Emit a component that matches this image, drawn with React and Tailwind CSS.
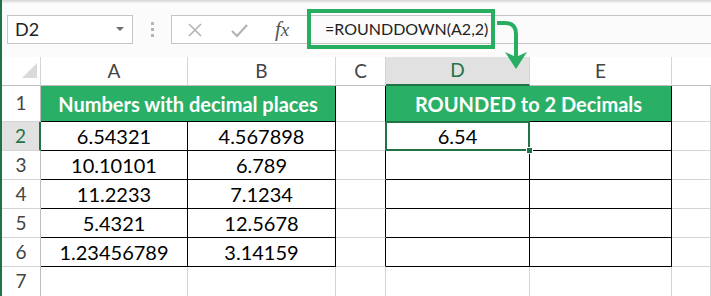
import React from 'react';

const FONT = { fontFamily: 'Lato, "Open Sans", sans-serif' };

const leftData = [
  ['6.54321', '4.567898'],
  ['10.10101', '6.789'],
  ['11.2233', '7.1234'],
  ['5.4321', '12.5678'],
  ['1.23456789', '3.14159'],
];

const ColHead = ({ label, active, last }) => (
  <div
    className={`flex items-center justify-center text-[19px] border-b ${
      last ? '' : 'border-r border-r-[#d4d4d4]'
    } ${
      active
        ? 'bg-[#e1e1e1] text-[#217346] border-b-2 border-b-[#217346]'
        : 'bg-white text-[#444] border-b-[#bdbdbd]'
    }`}
  >
    {label}
  </div>
);

const RowHead = ({ n, active }) => (
  <div
    className={`flex items-center justify-center text-[19px] border-b border-b-[#d4d4d4] ${
      active
        ? 'bg-[#e1e1e1] text-[#217346] border-r-2 border-r-[#217346]'
        : 'bg-white text-[#444] border-r border-r-[#bdbdbd]'
    }`}
  >
    {n}
  </div>
);

// plain body cell; black = inside one of the bordered tables
const Cell = ({ children, black, blackRight, className = '' }) => (
  <div
    className={`flex items-center justify-center text-[20px] text-black border-r border-b ${
      black ? 'border-b-black' : 'border-b-[#d4d4d4]'
    } ${black || blackRight ? 'border-r-black' : 'border-r-[#d4d4d4]'} ${className}`}
  >
    {children}
  </div>
);

const Toolbar = () => (
  <div className="h-[57px] flex flex-col bg-[#fbfbfb]">
    <div className="h-[3px] bg-gradient-to-b from-[#d6d6d6] to-[#f3f3f3]" />
    <div className="flex mt-[12px] h-[29px]">
      {/* name box */}
      <div className="ml-[5px] w-[126px] h-full bg-white border border-[#c6c6c6] flex items-center justify-between pl-[7px] pr-[8px]">
        <span className="text-[18px] text-[#222]">D2</span>
        <svg width="8" height="5" viewBox="0 0 8 5">
          <polygon points="0,0 8,0 4,4" fill="#6b6b6b" />
        </svg>
      </div>
      {/* grip dots */}
      <div className="w-[38px] flex flex-col items-center justify-center gap-[3px]">
        <span className="w-[3px] h-[3px] bg-[#b5b5b5]" />
        <span className="w-[3px] h-[3px] bg-[#b5b5b5]" />
        <span className="w-[3px] h-[3px] bg-[#b5b5b5]" />
      </div>
      {/* cancel / enter / fx */}
      <div className="w-[136px] h-full bg-white border border-[#c6c6c6] border-r-0 flex items-center pl-[15px]">
        <svg width="16" height="16" viewBox="0 0 16 16" className="mt-[1px]">
          <path d="M2 2 L14 14 M14 2 L2 14" stroke="#b3b3b3" strokeWidth="1.6" />
        </svg>
        <svg width="17" height="14" viewBox="0 0 17 14" className="ml-[28px] mt-[3px]">
          <path d="M1 7 L6 12 L16 1" stroke="#b3b3b3" strokeWidth="2.2" fill="none" />
        </svg>
        <span
          className="ml-[27px] text-[19px] italic text-[#555] leading-none"
          style={{ fontFamily: '"Liberation Serif", "DejaVu Serif", serif' }}
        >
          <span className="text-[21px]">f</span>x
        </span>
      </div>
      {/* formula input */}
      <div className="relative flex-1 h-full bg-[#fbfbfb] border-y border-[#c6c6c6]">
        <div className="absolute left-0 -top-[7px] w-[188px] h-[40px] border-4 border-[#27ae60] flex items-center pl-[14px] z-10">
          <span className="text-[16px] text-[#222]">=ROUNDDOWN(A2,2)</span>
        </div>
      </div>
    </div>
  </div>
);

const Arrow = () => (
  <svg className="absolute left-0 top-0 z-20 pointer-events-none" width="711" height="80" viewBox="0 0 711 80">
    <path d="M495 23 H503 Q514 23 514 34 V57" stroke="#27ae60" strokeWidth="4" fill="none" />
    <polygon points="503,52 514,57 525,52 514,69" fill="#27ae60" />
  </svg>
);

export default function App() {
  return (
    <div className="relative w-[711px] h-[296px] overflow-hidden bg-white border-l-2 border-[#217346]" style={FONT}>
      <Toolbar />
      <Arrow />
      <div className="grid grid-cols-[39px_147px_148px_50px_144px_142px_1fr] grid-rows-[29px_36px_29px_29px_29px_29px_29px_1fr] h-[239px]">
        {/* column headers */}
        <div className="relative bg-white border-r border-b border-r-[#d4d4d4] border-b-[#bdbdbd]">
          <svg className="absolute right-[3px] bottom-[7px]" width="15" height="15" viewBox="0 0 15 15">
            <polygon points="15,0 15,15 0,15" fill="#dadada" />
          </svg>
        </div>
        <ColHead label="A" />
        <ColHead label="B" />
        <ColHead label="C" />
        <ColHead label="D" active />
        <ColHead label="E" />
        <ColHead label="" last />

        {/* row 1 */}
        <RowHead n="1" />
        <div className="col-span-2 flex items-center justify-center bg-[#29b066] text-white font-bold text-[20px] border-r border-b border-black">
          Numbers with decimal places
        </div>
        <Cell blackRight />
        <div className="col-span-2 flex items-center justify-center bg-[#29b066] text-white font-bold text-[20px] border-r border-b border-black">
          ROUNDED to 2 Decimals
        </div>
        <Cell />

        {/* rows 2-6 */}
        {leftData.map(([a, b], i) => (
          <React.Fragment key={i}>
            <RowHead n={String(i + 2)} active={i === 0} />
            <Cell black>{a}</Cell>
            <Cell black>{b}</Cell>
            <Cell blackRight />
            {i === 0 ? (
              <Cell black className="relative">
                6.54
                <div className="absolute -left-[1px] -top-[1px] -right-[1px] -bottom-[1px] border-2 border-[#217346] z-10" />
                <div className="absolute -right-[4px] -bottom-[4px] w-[7px] h-[7px] bg-[#217346] border border-white z-10" />
              </Cell>
            ) : (
              <Cell black />
            )}
            <Cell black />
            <Cell />
          </React.Fragment>
        ))}

        {/* row 7 */}
        <RowHead n="7" />
        <Cell />
        <Cell />
        <Cell />
        <Cell />
        <Cell />
        <Cell />
      </div>
    </div>
  );
}
